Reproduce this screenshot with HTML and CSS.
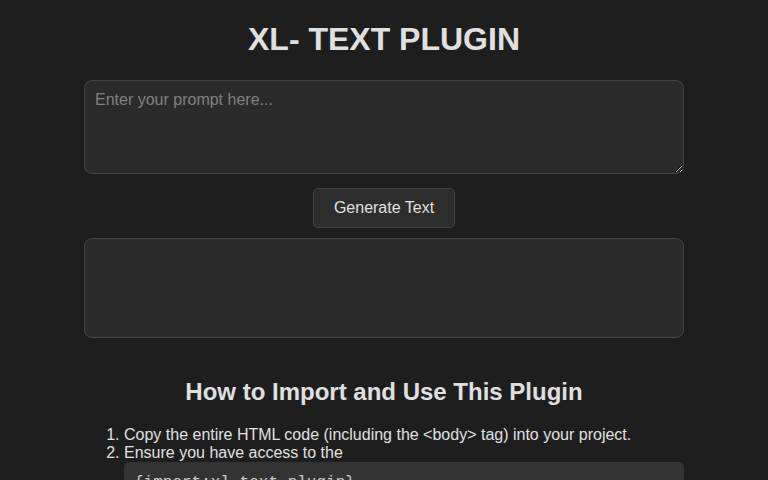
FILE: index.html
```html
<!DOCTYPE html>
<html>
<head>
<meta charset="utf-8">
<link rel="stylesheet" href="styles.css">
</head>
<body>
<div class="container">
  <h1 class="title">XL- TEXT PLUGIN</h1>
  <textarea class="prompt" placeholder="Enter your prompt here..."></textarea>
  <div class="actions"><button class="btn">Generate Text</button></div>
  <div class="output"></div>
  <h2 class="subtitle">How to Import and Use This Plugin</h2>
  <ol class="steps">
    <li>Copy the entire HTML code (including the &lt;body&gt; tag) into your project.</li>
    <li>Ensure you have access to the
      <pre class="code">{import:xl-text-plugin}</pre>
    </li>
  </ol>
</div>
</body>
</html>
```
FILE: styles.css
```css
html, body {
  margin: 0;
  background: #1e1e1e;
  color: #e0e0e0;
  font-family: "Liberation Sans", Arial, sans-serif;
}
body {
  padding: 21px 0;
}
.container {
  width: 600px;
  margin: 0 auto;
}
.title {
  font-size: 32px;
  font-weight: bold;
  text-align: center;
  margin: 0 0 22px;
  line-height: 37px;
}
.prompt {
  display: block;
  box-sizing: border-box;
  width: 600px;
  height: 94px;
  padding: 10px;
  background: #2b2b2b;
  border: 1px solid #444;
  border-radius: 8px;
  color: #e0e0e0;
  font-family: "Liberation Sans", Arial, sans-serif;
  font-size: 16px;
  outline: none;
}
.prompt::placeholder {
  color: #808080;
}
.actions {
  display: flex;
  justify-content: center;
  margin-top: 14px;
}
.btn {
  box-sizing: border-box;
  height: 40px;
  padding: 0 20px;
  background: #2d2d2d;
  border: 1px solid #444;
  border-radius: 5px;
  color: #e0e0e0;
  font-family: "Liberation Sans", Arial, sans-serif;
  font-size: 16px;
}
.output {
  box-sizing: border-box;
  height: 100px;
  margin-top: 10px;
  background: #2b2b2b;
  border: 1px solid #444;
  border-radius: 8px;
}
.subtitle {
  font-size: 24px;
  font-weight: bold;
  text-align: center;
  margin: 40px 0 21px;
  line-height: 27px;
}
.steps {
  margin: 0;
  padding-left: 40px;
  font-size: 16px;
  line-height: 18px;
}
.code {
  margin: 0;
  padding: 12px 10px 10px;
  background: #333;
  border-radius: 5px;
  font-family: "Liberation Mono", "Courier New", monospace;
  font-size: 16px;
  color: #ccc;
}
```
